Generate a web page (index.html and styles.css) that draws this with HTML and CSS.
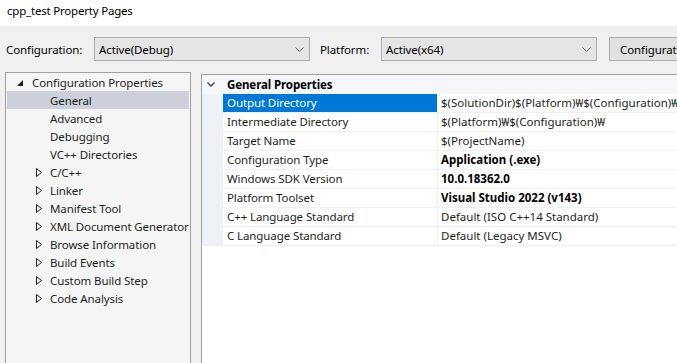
FILE: index.html
```html
<!DOCTYPE html>
<html lang="en">
  <head>
    <meta charset="UTF-8">
    <title>cpp_test Property Pages</title>
    <link rel="stylesheet" href="styles.css">
  </head>
  <body>
    <div class="titlebar">cpp_test Property Pages</div>

    <div class="toolbar">
      <label class="lbl lbl-config">Configuration:</label>
      <div class="select">
        <span>Active(Debug)</span>
        <svg class="chev" width="9" height="5" viewBox="0 0 9 5"><polyline points="0.5,0.5 4.5,4.5 8.5,0.5" fill="none" stroke="#606060"/></svg>
      </div>
      <label class="lbl lbl-platform">Platform:</label>
      <div class="select">
        <span>Active(x64)</span>
        <svg class="chev" width="9" height="5" viewBox="0 0 9 5"><polyline points="0.5,0.5 4.5,4.5 8.5,0.5" fill="none" stroke="#606060"/></svg>
      </div>
      <button class="btn">Configuration Manager...</button>
    </div>

    <div class="main">
      <div class="tree">
        <div class="node root">
          <svg class="arrow" width="6" height="6" viewBox="0 0 6 6"><polygon points="6,0 6,6 0,6" fill="#1e1e1e"/></svg>
          <span>Configuration Properties</span>
        </div>
        <div class="node leaf selected"><span>General</span></div>
        <div class="node leaf"><span>Advanced</span></div>
        <div class="node leaf"><span>Debugging</span></div>
        <div class="node leaf"><span>VC++ Directories</span></div>
        <div class="node branch"><svg class="arrow" width="6" height="9" viewBox="0 0 6 9"><polygon points="0.5,0.5 5.5,4.5 0.5,8.5" fill="none" stroke="#1e1e1e"/></svg><span>C/C++</span></div>
        <div class="node branch"><svg class="arrow" width="6" height="9" viewBox="0 0 6 9"><polygon points="0.5,0.5 5.5,4.5 0.5,8.5" fill="none" stroke="#1e1e1e"/></svg><span>Linker</span></div>
        <div class="node branch"><svg class="arrow" width="6" height="9" viewBox="0 0 6 9"><polygon points="0.5,0.5 5.5,4.5 0.5,8.5" fill="none" stroke="#1e1e1e"/></svg><span>Manifest Tool</span></div>
        <div class="node branch"><svg class="arrow" width="6" height="9" viewBox="0 0 6 9"><polygon points="0.5,0.5 5.5,4.5 0.5,8.5" fill="none" stroke="#1e1e1e"/></svg><span>XML Document Generator</span></div>
        <div class="node branch"><svg class="arrow" width="6" height="9" viewBox="0 0 6 9"><polygon points="0.5,0.5 5.5,4.5 0.5,8.5" fill="none" stroke="#1e1e1e"/></svg><span>Browse Information</span></div>
        <div class="node branch"><svg class="arrow" width="6" height="9" viewBox="0 0 6 9"><polygon points="0.5,0.5 5.5,4.5 0.5,8.5" fill="none" stroke="#1e1e1e"/></svg><span>Build Events</span></div>
        <div class="node branch"><svg class="arrow" width="6" height="9" viewBox="0 0 6 9"><polygon points="0.5,0.5 5.5,4.5 0.5,8.5" fill="none" stroke="#1e1e1e"/></svg><span>Custom Build Step</span></div>
        <div class="node branch"><svg class="arrow" width="6" height="9" viewBox="0 0 6 9"><polygon points="0.5,0.5 5.5,4.5 0.5,8.5" fill="none" stroke="#1e1e1e"/></svg><span>Code Analysis</span></div>
      </div>

      <div class="grid">
        <div class="category">
          <svg class="cat-chev" width="8" height="5" viewBox="0 0 8 5"><polyline points="0.5,0.5 4,4 7.5,0.5" fill="none" stroke="#444" stroke-width="1.4"/></svg>
          <span>General Properties</span>
        </div>
        <div class="row">
          <div class="name active">Output Directory</div>
          <div class="value">$(SolutionDir)$(Platform)₩$(Configuration)₩</div>
        </div>
        <div class="row">
          <div class="name">Intermediate Directory</div>
          <div class="value">$(Platform)₩$(Configuration)₩</div>
        </div>
        <div class="row">
          <div class="name">Target Name</div>
          <div class="value">$(ProjectName)</div>
        </div>
        <div class="row">
          <div class="name">Configuration Type</div>
          <div class="value bold">Application (.exe)</div>
        </div>
        <div class="row">
          <div class="name">Windows SDK Version</div>
          <div class="value bold">10.0.18362.0</div>
        </div>
        <div class="row">
          <div class="name">Platform Toolset</div>
          <div class="value bold">Visual Studio 2022 (v143)</div>
        </div>
        <div class="row">
          <div class="name">C++ Language Standard</div>
          <div class="value">Default (ISO C++14 Standard)</div>
        </div>
        <div class="row">
          <div class="name">C Language Standard</div>
          <div class="value">Default (Legacy MSVC)</div>
        </div>
      </div>
    </div>
  </body>
</html>
```

FILE: styles.css
```css
body {
  margin: 0;
  width: 677px;
  height: 363px;
  overflow: hidden;
  background-color: #f0f0f0;
  font-family: "Noto Sans", "Noto Sans CJK KR", sans-serif;
  font-size: 11.5px;
  letter-spacing: -0.1px;
  color: #1e1e1e;
}

.titlebar {
  height: 26px;
  line-height: 21px;
  padding-left: 7px;
  background-color: white;
  color: #000;
  letter-spacing: -0.2px;
}

.toolbar {
  height: 46px;
  display: flex;
  align-items: center;
  padding-left: 6px;
  white-space: nowrap;
}

.toolbar > * {
  flex-shrink: 0;
}

.lbl {
  color: #000;
}

.lbl-config {
  width: 88px;
}

.lbl-platform {
  width: 61px;
  margin-left: 10px;
}

.select {
  width: 216px;
  height: 24px;
  border: 1px solid #adadad;
  background-color: #e5e5e5;
  display: flex;
  align-items: center;
  justify-content: space-between;
  padding: 0 5px 0 4px;
  box-sizing: border-box;
  color: #000;
}

.btn {
  margin-left: 12px;
  height: 24px;
  padding: 0 10px;
  border: 1px solid #adadad;
  background-color: #e1e1e1;
  font-family: inherit;
  font-size: 11.5px;
  letter-spacing: -0.1px;
  color: #000;
  white-space: nowrap;
}

.main {
  display: flex;
  align-items: flex-start;
  padding-left: 5px;
}

.tree {
  width: 182px;
  height: 300px;
  border: 1px solid #a0a0a0;
  background-color: #f5f5f5;
  padding: 0 1px;
  flex-shrink: 0;
}

.node {
  height: 18px;
  display: flex;
  align-items: center;
  white-space: nowrap;
  overflow: hidden;
}

.arrow {
  flex-shrink: 0;
}

.node.root {
  padding-left: 10px;
}

.node.root .arrow {
  margin-right: 9px;
  margin-top: 2px;
}

.node.leaf {
  padding-left: 43px;
}

.node.branch {
  padding-left: 29px;
}

.node.branch .arrow {
  margin-right: 8px;
}

.node.selected {
  background-color: #cdd0da;
}

.grid {
  margin-left: 10px;
  margin-top: 2px;
  width: 520px;
  height: 300px;
  border: 1px solid #a0a0a0;
  border-right: none;
  background-color: white;
  flex-shrink: 0;
}

.category {
  height: 19px;
  display: flex;
  align-items: center;
  background-color: #f5f7fa;
  font-weight: bold;
  color: #000;
}

.cat-chev {
  margin-left: 5px;
  margin-right: 12px;
}

.row {
  display: flex;
  height: 19px;
  padding-left: 21px;
  background-color: #eef2f8;
}

.name,
.value {
  height: 18px;
  line-height: 18px;
  background-color: white;
  border-bottom: 1px solid #eef0f3;
  white-space: nowrap;
  overflow: hidden;
}

.name {
  width: 210px;
  padding-left: 4px;
  border-right: 1px solid #eef0f3;
}

.name.active {
  background-color: #0078d7;
  color: white;
}

.value {
  flex: 1;
  padding-left: 3px;
  letter-spacing: 0;
}

.value.bold {
  font-weight: bold;
  color: #000;
}
```
